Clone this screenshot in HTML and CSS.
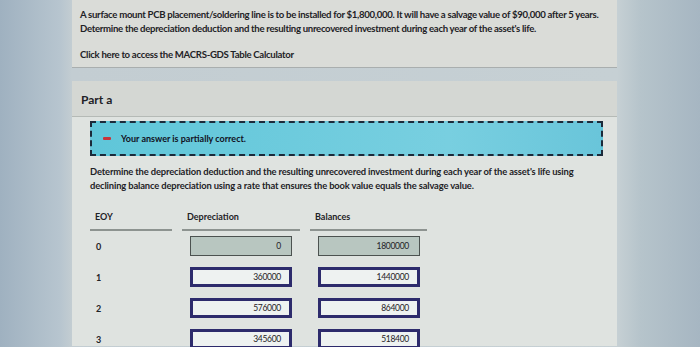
FILE: index.html
```html
<!DOCTYPE html>
<html lang="en">
<head>
    <meta charset="UTF-8">
    <title>Part a - MACRS depreciation</title>
    <link rel="stylesheet" href="styles.css">
</head>
<body>
    <div class="column">
        <div class="question">
            <p>A surface mount PCB placement/soldering line is to be installed for $1,800,000. It will have a salvage value of $90,000 after 5 years.<br>
            Determine the depreciation deduction and the resulting unrecovered investment during each year of the asset's life.</p>
            <p class="calc">Click <a href="#">here</a> to access the MACRS-GDS Table Calculator</p>
        </div>

        <div class="part">
            <div class="part-head">Part a</div>
            <div class="part-body">
                <div class="feedback">
                    <span class="minus"></span>
                    <span>Your answer is partially correct.</span>
                </div>
                <p class="prompt">Determine the depreciation deduction and the resulting unrecovered investment during each year of the asset's life using<br>
                declining balance depreciation using a rate that ensures the book value equals the salvage value.</p>

                <div class="table">
                    <div class="th">EOY</div>
                    <div class="th">Depreciation</div>
                    <div class="th">Balances</div>

                    <div class="eoy">0</div>
                    <div class="cell"><span class="box locked">0</span></div>
                    <div class="cell"><span class="box locked">1800000</span></div>

                    <div class="eoy">1</div>
                    <div class="cell"><span class="box">360000</span></div>
                    <div class="cell"><span class="box">1440000</span></div>

                    <div class="eoy">2</div>
                    <div class="cell"><span class="box">576000</span></div>
                    <div class="cell"><span class="box">864000</span></div>

                    <div class="eoy">3</div>
                    <div class="cell"><span class="box">345600</span></div>
                    <div class="cell"><span class="box">518400</span></div>
                </div>
            </div>
        </div>
    </div>
</body>
</html>
```

FILE: styles.css
```css
body { margin: 0; height: 347px; overflow: hidden; font-family: Lato, "Open Sans", sans-serif; color: #1e2226;
       background: linear-gradient(90deg, #9fb1c0 0, #b7c5cf 60px, #c3cdd2 72px, #c6d0d4 617px, #b6c4cb 640px, #a6b6c2 700px); }
p { margin: 0; }
.column { margin-left: 72px; width: 545px; }

.question { background: #dadcd8; border-bottom: 1px solid #a9aeae; height: 68px; padding: 8px 0 0 8px; box-sizing: border-box;
            font-size: 9.6px; line-height: 13.5px; font-weight: 700; letter-spacing: -0.3px; }
.question .calc { margin-top: 13px; }
.question a { color: #1e2226; text-decoration: none; }

.part { margin-top: 13px; background: #dfe3e0; height: 265px; }
.part-head { height: 36px; box-sizing: border-box; padding: 11px 0 0 9px; background: #d4d7d3; border-bottom: 1px solid #b5bab6;
             font-size: 12px; font-weight: 700; }
.part-body { padding: 4px 14px 0 18px; }

.feedback { display: flex; align-items: center; gap: 10px; height: 35px; box-sizing: border-box; padding-left: 11px;
            background: linear-gradient(90deg, #5fc6d9, #78cfe0 70%, #69c5da); border: 2px dashed #1b2a3a;
            font-size: 9px; font-weight: 700; color: #112; }
.minus { width: 8px; height: 3px; background: #c9343a; border-radius: 1px; }

.prompt { margin-top: 9px; font-size: 9.4px; line-height: 14px; font-weight: 700; letter-spacing: -0.15px; }

.table { display: grid; grid-template-columns: 82px 118px 117px; grid-auto-rows: 31px; column-gap: 10px; margin-top: 8px; }
.table .th { height: 30px; box-sizing: border-box; border-bottom: 2px solid #8d9390; padding: 10px 0 0 5px;
             font-size: 9px; font-weight: 700; }
.eoy { padding: 9px 0 0 6px; font-size: 9px; font-weight: 700; }
.cell { padding: 4px 0 0 8px; }
.box { display: block; width: 102px; height: 20px; box-sizing: border-box; padding-right: 8px; border: 3px solid #2d2b6c;
       background: #eef2f1; text-align: right; font-size: 8.5px; line-height: 14px; letter-spacing: -0.3px; }
.box.locked { border: 1px solid #4c5250; background: #b8c6c0; line-height: 18px; padding-right: 10px; }
```
